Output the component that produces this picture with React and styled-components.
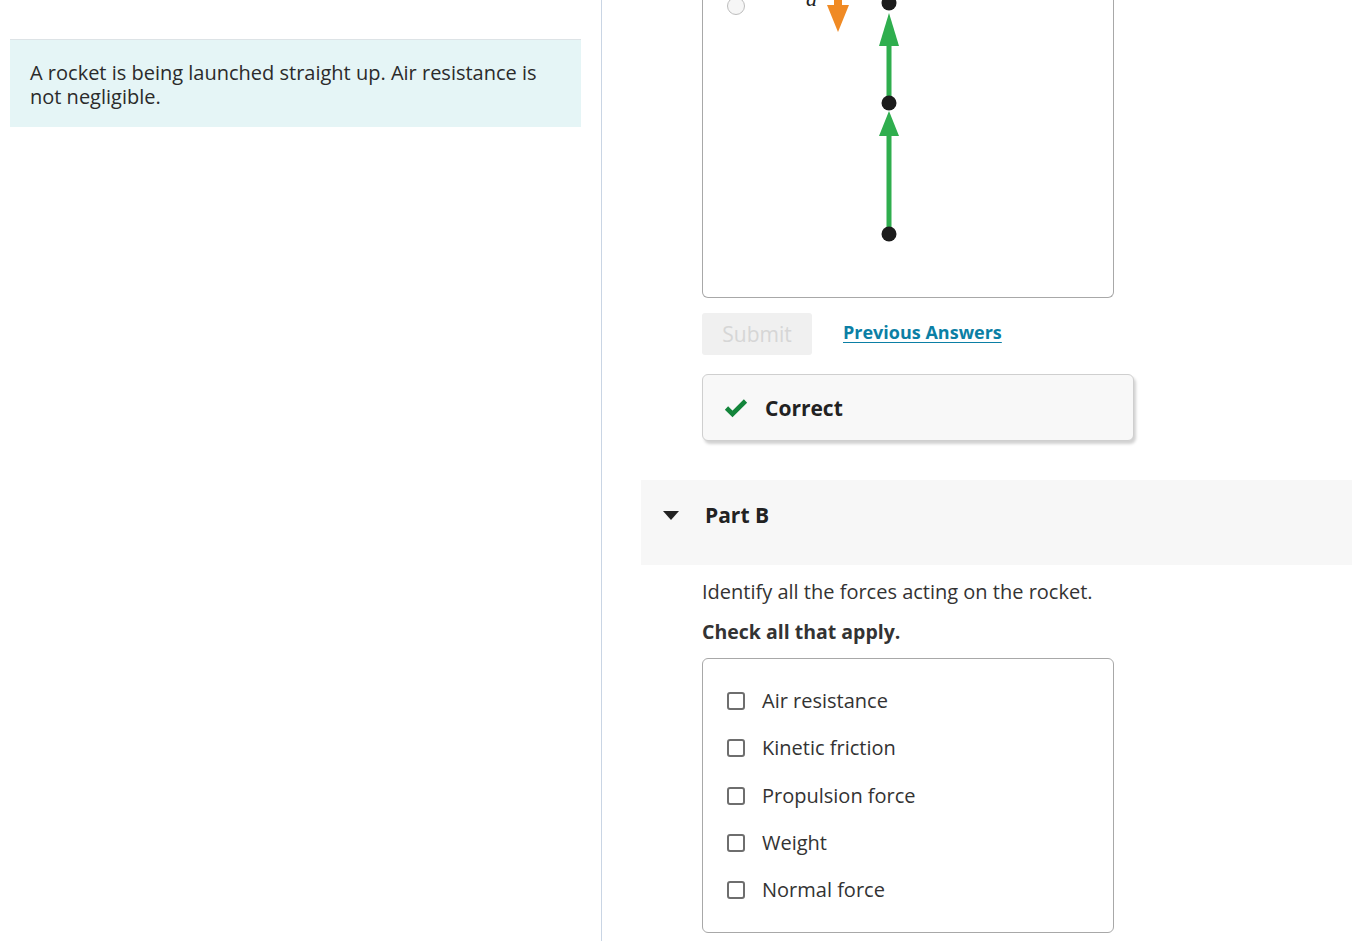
import React from 'react';
import styled, { createGlobalStyle } from 'styled-components';

const GlobalStyle = createGlobalStyle`
  html, body {
    margin: 0;
    padding: 0;
    background: #ffffff;
    font-family: "Open Sans", "Noto Sans", sans-serif;
    color: #333333;
  }
`;

const Page = styled.div`
  display: flex;
  width: 1352px;
  height: 941px;
  overflow: hidden;
`;

const LeftPane = styled.div`
  width: 602px;
  flex: none;
  border-right: 1px solid #c9d5e4;
  padding: 39px 20px 0 10px;
  box-sizing: border-box;
`;

const Intro = styled.div`
  background: #e5f5f6;
  border-top: 1px solid #dde3e6;
  padding: 21px 20px 18px 20px;
  font-size: 20px;
  line-height: 24px;
  color: #2b2b2b;
`;

const RightPane = styled.div`
  flex: 1;
  padding-left: 39px;
  display: flex;
  flex-direction: column;
`;

const Indented = styled.div`
  padding-left: 61px;
  display: flex;
  flex-direction: column;
  align-items: flex-start;
`;

const FigureBox = styled.div`
  width: 412px;
  height: 298px;
  box-sizing: border-box;
  border: 1px solid #a8a8a8;
  border-top: none;
  border-radius: 0 0 6px 6px;
  overflow: hidden;
  display: flex;
  align-items: flex-start;
`;

const Radio = styled.span`
  width: 18px;
  height: 18px;
  margin: -3px 0 0 24px;
  border-radius: 50%;
  border: 1px solid #bdbdbd;
  background: #f6f6f6;
  box-sizing: border-box;
  flex: none;
`;

const Actions = styled.div`
  display: flex;
  align-items: center;
  gap: 31px;
  margin-top: 15px;
`;

const SubmitButton = styled.button`
  width: 110px;
  height: 42px;
  border: none;
  border-radius: 3px;
  background: #f0f0f0;
  color: #d6d6d6;
  font-family: inherit;
  font-size: 21px;
  padding: 0;
`;

const PrevLink = styled.a`
  color: #0b7fa5;
  font-weight: 700;
  font-size: 18px;
  text-decoration: underline;
  text-underline-offset: 3px;
  margin-top: -4px;
`;

const Feedback = styled.div`
  margin-top: 19px;
  width: 432px;
  height: 67px;
  box-sizing: border-box;
  border: 1px solid #cfcfcf;
  border-radius: 6px;
  background: #f8f8f8;
  box-shadow: 2px 3px 3px rgba(0, 0, 0, 0.18);
  display: flex;
  align-items: center;
  padding-left: 21px;
  gap: 17px;
  font-size: 21px;
  font-weight: 700;
  color: #222222;
`;

const PartHeader = styled.div`
  margin-top: 39px;
  height: 85px;
  box-sizing: border-box;
  background: #f7f7f7;
  display: flex;
  align-items: flex-start;
  padding: 21px 0 0 22px;
  gap: 26px;
  font-size: 21px;
  line-height: 28px;
  font-weight: 700;
  color: #222222;
`;

const Caret = styled.span`
  width: 0;
  height: 0;
  margin-top: 10px;
  border-left: 8px solid transparent;
  border-right: 8px solid transparent;
  border-top: 9px solid #222222;
`;

const Prompt = styled.p`
  margin: 15px 0 0 0;
  font-size: 20px;
  line-height: 24px;
  color: #333333;
`;

const Instruction = styled.p`
  margin: 16px 0 0 0;
  font-size: 19.5px;
  line-height: 24px;
  font-weight: 700;
  color: #333333;
`;

const ChoiceBox = styled.div`
  margin-top: 14px;
  width: 412px;
  height: 275px;
  box-sizing: border-box;
  border: 1px solid #a8a8a8;
  border-radius: 6px;
  padding: 30px 0 0 24px;
  display: flex;
  flex-direction: column;
  gap: 23.3px;
`;

const Choice = styled.label`
  display: flex;
  align-items: center;
  gap: 17px;
  font-size: 20px;
  line-height: 24px;
  color: #333333;
`;

const Box = styled.span`
  width: 18px;
  height: 18px;
  box-sizing: border-box;
  border: 2px solid #6e6e6e;
  border-radius: 3px;
  flex: none;
  background: #fff;
`;

const Figure = () => (
  <svg width="200" height="260" viewBox="770 0 200 260" style={{ marginLeft: 25 }}>
    <text x="806" y="6" fontFamily="Liberation Serif, serif" fontStyle="italic" fontSize="22" fill="#222">a</text>
    <rect x="834" y="-6" width="8" height="14" fill="#f08a24" />
    <polygon points="827,5 849,5 838,32" fill="#f08a24" />
    <rect x="886.5" y="30" width="5" height="75" fill="#2fae4e" />
    <polygon points="879,46 899,46 889,13" fill="#2fae4e" />
    <rect x="886.5" y="125" width="5" height="108" fill="#2fae4e" />
    <polygon points="879,136 899,136 889,111" fill="#2fae4e" />
    <circle cx="889" cy="3" r="7.5" fill="#1c1c1c" />
    <circle cx="889" cy="103" r="7.5" fill="#1c1c1c" />
    <circle cx="889" cy="234" r="7.5" fill="#1c1c1c" />
  </svg>
);

const CheckIcon = () => (
  <svg width="24" height="20" viewBox="0 0 24 20">
    <path d="M2.5 10 L8.5 16 L21.5 3" fill="none" stroke="#13853b" strokeWidth="4.6" strokeLinecap="butt" />
  </svg>
);

const choices = ['Air resistance', 'Kinetic friction', 'Propulsion force', 'Weight', 'Normal force'];

export default function App() {
  return (
    <Page>
      <GlobalStyle />
      <LeftPane>
        <Intro>A rocket is being launched straight up. Air resistance is not negligible.</Intro>
      </LeftPane>
      <RightPane>
        <Indented>
          <FigureBox>
            <Radio />
            <Figure />
          </FigureBox>
          <Actions>
            <SubmitButton disabled>Submit</SubmitButton>
            <PrevLink href="#">Previous Answers</PrevLink>
          </Actions>
          <Feedback>
            <CheckIcon />
            Correct
          </Feedback>
        </Indented>
        <PartHeader>
          <Caret />
          Part B
        </PartHeader>
        <Indented>
          <Prompt>Identify all the forces acting on the rocket.</Prompt>
          <Instruction>Check all that apply.</Instruction>
          <ChoiceBox>
            {choices.map((c) => (
              <Choice key={c}>
                <Box />
                {c}
              </Choice>
            ))}
          </ChoiceBox>
        </Indented>
      </RightPane>
    </Page>
  );
}
